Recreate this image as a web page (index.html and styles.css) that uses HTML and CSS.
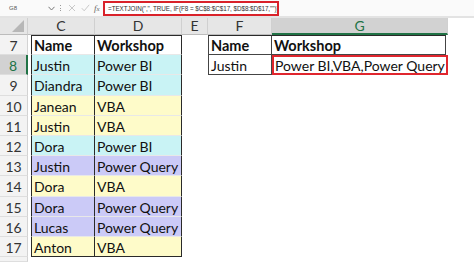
FILE: index.html
```html
<!DOCTYPE html>
<html>
<head>
<meta charset="utf-8">
<link rel="stylesheet" href="styles.css">
</head>
<body>
<div class="app">
  <div class="fbar">
    <div class="namebox">G8</div>
    <div class="nb-arrow"><svg width="7" height="5" viewBox="0 0 7 5"><path d="M0.5 0.8 L3.5 4 L6.5 0.8" fill="none" stroke="#777" stroke-width="1"/></svg></div>
    <div class="dots"><span></span><span></span><span></span></div>
    <div class="ficon"><svg width="8" height="8" viewBox="0 0 8 8"><path d="M1 1 L7 7 M7 1 L1 7" stroke="#c8c8c8" stroke-width="1"/></svg></div>
    <div class="ficon"><svg width="9" height="8" viewBox="0 0 9 8"><path d="M0.8 4.2 L3.2 6.8 L8.2 0.8" fill="none" stroke="#c8c8c8" stroke-width="1"/></svg></div>
    <div class="fx">f<span>x</span></div>
    <div class="formula">=TEXTJOIN(",", TRUE, IF(F8 = $C$8:$C$17, $D$8:$D$17,""))</div>
  </div>
  <div class="sheet">
    <div class="corner"><div class="tri"></div></div>
    <div class="colh">C</div>
    <div class="colh">D</div>
    <div class="colh">E</div>
    <div class="colh">F</div>
    <div class="colh sel">G</div>
    <div class="colh rest"></div>

    <div class="rowh">7</div>
    <div class="c l top hd">Name</div>
    <div class="c r top hd">Workshop</div>
    <div class="e"></div>
    <div class="c fl top hd">Name</div>
    <div class="c gr top hd">Workshop</div>
    <div class="e"></div>

    <div class="rowh sel">8</div>
    <div class="c l bi">Justin</div>
    <div class="c r bi">Power BI</div>
    <div class="e"></div>
    <div class="c fl bot">Justin</div>
    <div class="c gr bot active">Power BI,VBA,Power Query</div>
    <div class="e"></div>

    <div class="rowh">9</div>
    <div class="c l bi">Diandra</div>
    <div class="c r bi">Power BI</div>
    <div class="e span4"></div>

    <div class="rowh">10</div>
    <div class="c l vba">Janean</div>
    <div class="c r vba">VBA</div>
    <div class="e span4"></div>

    <div class="rowh">11</div>
    <div class="c l vba">Justin</div>
    <div class="c r vba">VBA</div>
    <div class="e span4"></div>

    <div class="rowh">12</div>
    <div class="c l bi">Dora</div>
    <div class="c r bi">Power BI</div>
    <div class="e span4"></div>

    <div class="rowh">13</div>
    <div class="c l pq">Justin</div>
    <div class="c r pq">Power Query</div>
    <div class="e span4"></div>

    <div class="rowh">14</div>
    <div class="c l vba">Dora</div>
    <div class="c r vba">VBA</div>
    <div class="e span4"></div>

    <div class="rowh">15</div>
    <div class="c l pq">Dora</div>
    <div class="c r pq">Power Query</div>
    <div class="e span4"></div>

    <div class="rowh">16</div>
    <div class="c l pq">Lucas</div>
    <div class="c r pq">Power Query</div>
    <div class="e span4"></div>

    <div class="rowh">17</div>
    <div class="c l vba last">Anton</div>
    <div class="c r vba last">VBA</div>
    <div class="e span4"></div>

    <div class="rowh"></div>
    <div class="e span6"></div>
  </div>
</div>
</body>
</html>
```

FILE: styles.css
```css
* { box-sizing: border-box; }
html, body { margin: 0; padding: 0; background: #fff; }
body { width: 474px; height: 262px; overflow: hidden; font-family: Lato, "Open Sans", sans-serif; }

.app { width: 474px; height: 262px; display: flex; flex-direction: column; }

.fbar {
  height: 18px;
  display: flex;
  align-items: center;
  background: #fafafa;
  border-bottom: 2px solid #e3e3e3;
  padding-left: 4px;
}
.namebox {
  width: 42px;
  height: 14px;
  font-family: "Liberation Sans", sans-serif;
  font-size: 6px;
  color: #555;
  padding-left: 5px;
  line-height: 14px;
}
.nb-arrow { width: 8px; display: flex; align-items: center; margin-left: 2px; }
.dots { display: flex; flex-direction: column; gap: 1.5px; margin-left: 4px; width: 3px; }
.dots span { width: 1px; height: 1px; background: #9a9a9a; display: block; }
.ficon { display: flex; align-items: center; margin-left: 5px; }
.fx {
  font-family: "Liberation Serif", serif;
  font-style: italic;
  font-size: 9px;
  color: #666;
  margin-left: 4px;
  width: 8px;
}
.fx span { font-size: 7px; }
.formula {
  margin-left: 1px;
  width: 176px;
  height: 15px;
  border: 2px solid #d9222a;
  font-family: "Liberation Sans", sans-serif;
  font-size: 6.3px;
  letter-spacing: -0.05px;
  line-height: 11px;
  color: #333;
  padding-left: 3px;
  white-space: nowrap;
  overflow: hidden;
  background: #fff;
}

.sheet {
  display: grid;
  grid-template-columns: 28px 67px 87px 26px 64px 176px 1fr;
  grid-template-rows: 17px repeat(11, 20.2px) 1fr;
  flex: 1;
}
.corner {
  background: #e6e6e6;
  border-right: 1px solid #d0d0d0;
  border-bottom: 1px solid #bcbcbc;
  position: relative;
}
.tri {
  position: absolute;
  right: 3px;
  bottom: 2px;
  width: 0; height: 0;
  border-left: 12px solid transparent;
  border-bottom: 12px solid #b7b7b7;
}
.colh {
  background: #e6e6e6;
  border-right: 1px solid #d0d0d0;
  border-bottom: 1px solid #bcbcbc;
  text-align: center;
  font-size: 14px;
  line-height: 16px;
  color: #333;
}
.colh.sel { background: #d2d2d2; color: #217346; border-bottom: 2px solid #217346; }
.colh.rest { background: #fff; border: none; }

.rowh {
  background: #f3f3f3;
  border-right: 1px solid #d3d3d3;
  border-bottom: 1px solid #dedede;
  text-align: center;
  font-size: 14px;
  line-height: 21px;
  color: #333;
}
.rowh.sel { background: #d2d2d2; color: #217346; border-right: 2px solid #217346; }

.e { background: #fff; }
.span4 { grid-column: span 4; }
.span6 { grid-column: span 6; }

.c {
  font-size: 14px;
  line-height: 21px;
  color: #111;
  padding-left: 2px;
  white-space: nowrap;
  border-bottom: 1px solid #e8e8e8;
}
.c.l { margin-left: 3px; border-left: 1.5px solid #2a2a2a; border-right: 1.5px solid #2a2a2a; }
.c.r { border-right: 1.5px solid #2a2a2a; }
.c.top { border-top: 1.5px solid #2a2a2a; line-height: 19px; }
.c.last { border-bottom: 1.5px solid #2a2a2a; }
.hd { font-weight: 700; background: #fff; font-size: 14.5px; }
.bi { background: #c9f3f5; }
.vba { background: #fefbc9; }
.pq { background: #cbcaf7; }

.c.fl { border-left: 1.5px solid #444; border-right: 1.5px solid #444; border-bottom: 1.5px solid #444; }
.c.gr { border-right: 1.5px solid #444; border-bottom: 1.5px solid #444; margin-right: 2px; }
.c.fl.bot, .c.gr.bot { background: #fff; }
.c.active { border: 2px solid #e0262e; padding-left: 1px; margin-right: 0; line-height: 17px; }
```
